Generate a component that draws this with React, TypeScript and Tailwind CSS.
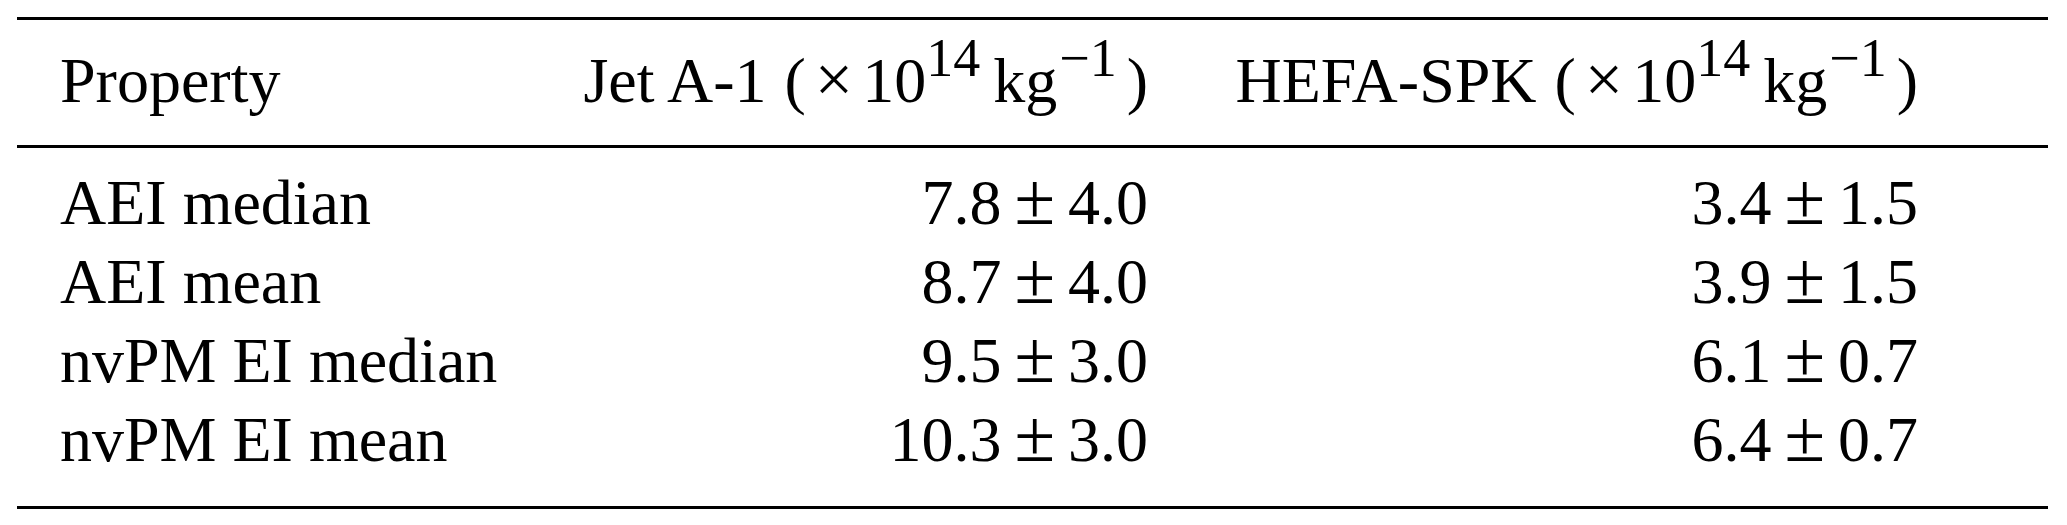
import React from "react";

const rows: [string, string, string, string, string][] = [
  ["AEI median", "7.8", "4.0", "3.4", "1.5"],
  ["AEI mean", "8.7", "4.0", "3.9", "1.5"],
  ["nvPM EI median", "9.5", "3.0", "6.1", "0.7"],
  ["nvPM EI mean", "10.3", "3.0", "6.4", "0.7"],
];

function Unit() {
  return (
    <span className="whitespace-nowrap">
      <span className="ml-[2px]">(</span>
      <span className="ml-[9px] text-[68px] leading-[0]">×</span>
      <span className="ml-[9px]">10</span>
      <span className="relative -top-[26px] text-[54px] leading-[0]">14</span>
      <span className="ml-[13px]">kg</span>
      <span className="relative -top-[26px] text-[54px] leading-[0] ml-[2px]">−1</span>
      <span className="ml-[10px]">)</span>
    </span>
  );
}

function PM({ a, b }: { a: string; b: string }) {
  return (
    <span className="whitespace-nowrap">
      {a}
      <span className="mx-[13px] text-[74px] leading-[0]">±</span>
      {b}
    </span>
  );
}

export default function App() {
  return (
    <div className="min-h-[525px] w-[2067px] bg-white pt-[17px] pl-[17px] font-['Liberation_Serif','Times_New_Roman',serif] text-[64px] leading-[79px] text-black">
      <div className="w-[2031px] border-t-[3px] border-black">
        <div className="grid grid-cols-[523px_651px_770px_87px] border-b-[3px] border-black pt-[21px] pb-[25px]">
          <div className="pl-[43px] whitespace-nowrap">Property</div>
          <div className="pr-[43px] text-right whitespace-nowrap">
            Jet A-1 <Unit />
          </div>
          <div className="pr-[43px] text-right whitespace-nowrap">
            HEFA-SPK <Unit />
          </div>
          <div />
        </div>
        <div className="grid grid-cols-[523px_651px_770px_87px] border-b-[3px] border-black pt-[15px] pb-[27px]">
          {rows.map((r) => (
            <React.Fragment key={r[0]}>
              <div className="pl-[43px] whitespace-nowrap">{r[0]}</div>
              <div className="pr-[43px] text-right">
                <PM a={r[1]} b={r[2]} />
              </div>
              <div className="pr-[43px] text-right">
                <PM a={r[3]} b={r[4]} />
              </div>
              <div />
            </React.Fragment>
          ))}
        </div>
      </div>
    </div>
  );
}
